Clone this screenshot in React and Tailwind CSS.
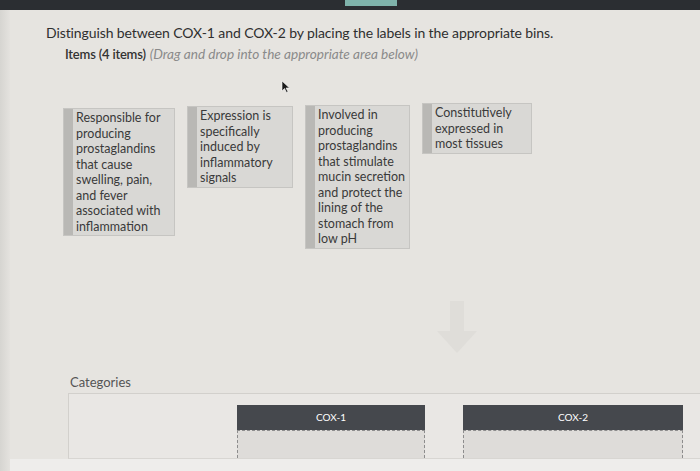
import React from "react";

const cards = [
  { w: "w-[112px]", mt: "mt-[5px]", lines: ["Responsible for", "producing", "prostaglandins", "that cause", "swelling, pain,", "and fever", "associated with", "inflammation"] },
  { w: "w-[106px]", mt: "mt-[3px]", lines: ["Expression is", "specifically", "induced by", "inflammatory", "signals"] },
  { w: "w-[105px]", mt: "mt-[2px]", lines: ["Involved in", "producing", "prostaglandins", "that stimulate", "mucin secretion", "and protect the", "lining of the", "stomach from", "low pH"] },
  { w: "w-[110px]", mt: "mt-0", lines: ["Constitutively", "expressed in", "most tissues"] },
];

function Card({ c }) {
  return (
    <div className={`${c.w} ${c.mt} flex border border-[#c6c5c2] bg-[#d9d8d5]`}>
      <div className="w-[9px] shrink-0 bg-[#b9b8b5]" />
      <div className="pl-[3px] pr-1 py-[1px] text-[12.5px] leading-[15.5px] text-[#3a3a3a]">
        {c.lines.map((l, i) => (
          <div key={i} className="whitespace-nowrap">{l}</div>
        ))}
      </div>
    </div>
  );
}

export default function App() {
  return (
    <div className="w-[700px] h-[471px] overflow-hidden bg-[#e6e4e0] flex flex-col font-['Lato','Liberation_Sans',sans-serif]">
      <div className="h-[10px] shrink-0 bg-[#2b2e32] flex">
        <div className="w-[345px]" />
        <div className="w-[52px] h-[6px] bg-[#7fb3ab]" />
      </div>
      <div className="flex-1 flex">
        <div className="w-[10px] shrink-0 bg-gradient-to-r from-[#d6d5d1] to-[#e4e2de]" />
        <div className="flex-1 flex flex-col">
          <div className="pl-[36px] pt-[14px] text-[14px] leading-[17px] text-[#2f2f2f] tracking-[-0.1px]">
            Distinguish between COX-1 and COX-2 by placing the labels in the appropriate bins.
          </div>
          <div className="pl-[55px] pt-[4px] text-[13px] leading-[18px] flex items-baseline gap-[4px]">
            <span className="font-semibold text-[#333] tracking-[-0.2px]">Items (4 items)</span>
            <span className="italic text-[13.6px] text-[#8a8a8a]">(Drag and drop into the appropriate area below)</span>
          </div>
          <div className="h-[40px] relative">
            <svg className="absolute left-[271px] top-[18px]" width="9" height="12" viewBox="0 0 9 12">
              <path d="M1 0 L1 10 L3.5 7.5 L5.5 11.5 L7 10.8 L5 7 L8.5 7 Z" fill="#1a1a1a" stroke="#fff" strokeWidth="0.6" />
            </svg>
          </div>
          <div className="pl-[53px] flex items-start gap-[12px]">
            {cards.map((c, i) => (
              <Card key={i} c={c} />
            ))}
          </div>
          <div className="flex-1 relative">
            <svg className="absolute left-[427px] top-[52px]" width="40" height="52" viewBox="0 0 40 52">
              <rect x="13" y="0" width="14" height="30" fill="#dfddd9" />
              <path d="M0 30 L40 30 L20 52 Z" fill="#dfddd9" />
            </svg>
          </div>
          <div className="pl-[60px] text-[13px] leading-[16px] text-[#555] pb-[3px]">Categories</div>
          <div className="ml-[58px] h-[66px] border border-[#d2d0cc] border-r-0 border-b-[#d8d6d2] bg-[#e9e7e4] flex pl-[168px] pt-[11px] gap-[38px]">
            <div className="w-[188px] flex flex-col">
              <div className="h-[25px] bg-[#45484d] text-white text-[10px] flex items-center justify-center">COX-1</div>
              <div className="flex-1 border border-dashed border-[#8d8d8d] border-b-0 bg-[#dedcd9]" />
            </div>
            <div className="w-[220px] flex flex-col">
              <div className="h-[25px] bg-[#45484d] text-white text-[10px] flex items-center justify-center">COX-2</div>
              <div className="flex-1 border border-dashed border-[#8d8d8d] border-b-0 bg-[#dedcd9]" />
            </div>
          </div>
          <div className="h-[12px] bg-[#eeedeb]" />
        </div>
      </div>
    </div>
  );
}
